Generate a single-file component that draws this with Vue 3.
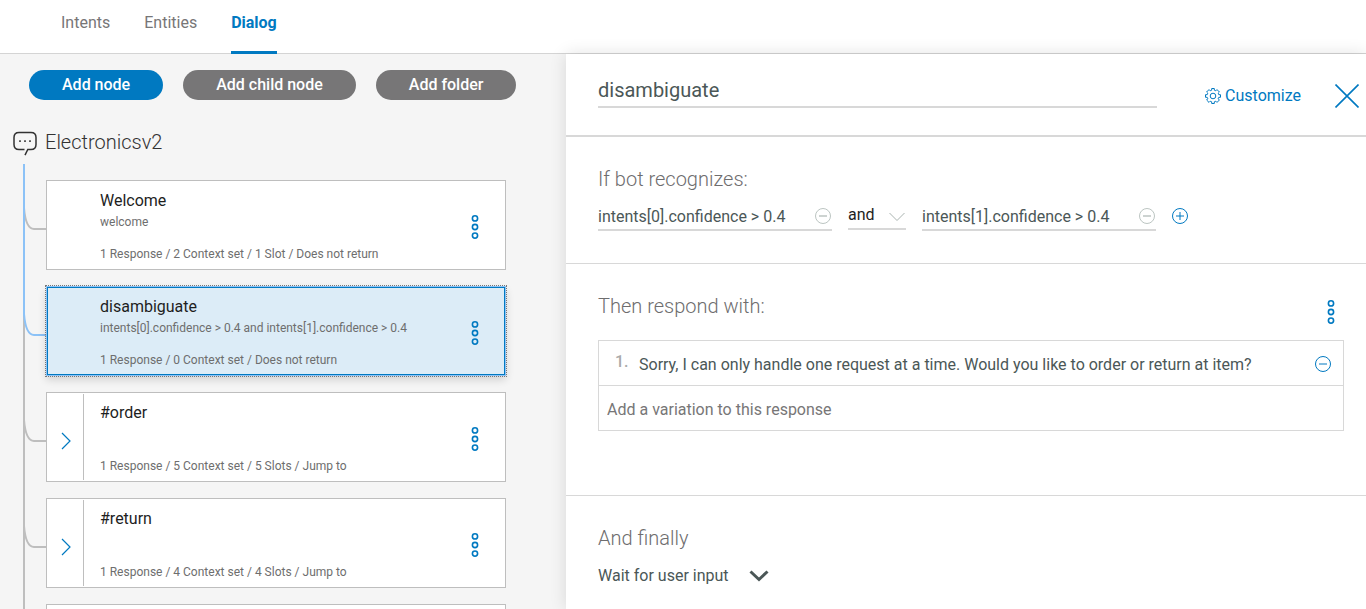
<template>
    <div class="workspace">
        <nav class="tabs">
            <a
                v-for="tab in tabs"
                :key="tab"
                href="#"
                class="tab"
                :class="{ active: tab === activeTab }"
                @click.prevent="activeTab = tab"
            >{{ tab }}</a>
        </nav>

        <div class="content">
            <section class="tree">
                <div class="toolbar">
                    <button type="button" class="pill primary">Add node</button>
                    <button type="button" class="pill">Add child node</button>
                    <button type="button" class="pill">Add folder</button>
                </div>

                <h1 class="skill">
                    <svg class="skill-icon" width="26" height="26" viewBox="0 0 26 26" fill="none" stroke="#323232" stroke-width="1.5">
                        <path d="M12.5 18.5H7Q2 18.5 2 13.500V6.500Q2 1.500 7 1.500H19Q24 1.500 24 6.500V13.500Q24 18.500 19 18.500H15.800L13 24.200" />
                        <path d="M7.200 10.200h1.600M12.200 10.200h1.600M17.200 10.200h1.600" stroke-width="1.700" />
                    </svg>
                    Electronicsv2
                </h1>

                <ul class="nodes">
                    <li v-for="node in nodes" :key="node.name" class="node">
                        <svg class="branch" width="23" height="106" viewBox="0 0 23 106" fill="none" stroke-width="2">
                            <path d="M1 0V106" stroke="#bebebe" />
                            <path d="M1 44C2 56 5 65 11 65H23" :stroke="node.trail === 'here' ? '#8cc2f7' : '#bebebe'" />
                            <path v-if="node.trail === 'here'" d="M1 0V46" stroke="#8cc2f7" />
                            <path v-if="node.trail === 'above'" d="M1 0V106" stroke="#8cc2f7" />
                        </svg>
                        <article class="card" :class="{ selected: node.name === selected }" @click="selected = node.name">
                            <div class="gutter" :class="{ divided: node.children }">
                                <button v-if="node.children" type="button" class="icon-button" :aria-label="`Expand ${node.name}`">
                                    <svg width="10" height="18" viewBox="0 0 10 18" fill="none" stroke="#0079c1" stroke-width="1.200">
                                        <path d="M1 1l8 8-8 8" />
                                    </svg>
                                </button>
                            </div>
                            <div class="card-body">
                                <h2 class="node-name">{{ node.name }}</h2>
                                <p class="condition">{{ node.condition }}</p>
                                <p class="summary">{{ node.summary }}</p>
                            </div>
                            <button type="button" class="icon-button card-menu" :aria-label="`${node.name} options`">
                                <svg width="8" height="24" viewBox="0 0 8 24" fill="none" stroke="#0079c1" stroke-width="1.600">
                                    <circle cx="4" cy="3.400" r="2.600" />
                                    <circle cx="4" cy="12" r="2.600" />
                                    <circle cx="4" cy="20.600" r="2.600" />
                                </svg>
                            </button>
                        </article>
                    </li>
                </ul>
            </section>

            <section class="editor">
                <header class="editor-header">
                    <input v-model="nodeName" class="name-input" type="text" aria-label="Node name">
                    <button type="button" class="icon-button customize">
                        <svg width="16" height="16" viewBox="0 0 16 16" fill="none" stroke="#0079c1" stroke-width="1">
                            <path d="M6.700 .5h2.600v1.700l1.500.6L12 1.600 14.400 4l-1.200 1.200.6 1.500h1.700v2.600h-1.700l-.6 1.500 1.200 1.200-2.400 2.400-1.200-1.200-1.500.6v1.700H6.700v-1.700l-1.500-.6L4 14.400 1.600 12l1.200-1.200-.6-1.500H.5V6.700h1.700l.6-1.500L1.600 4 4 1.600l1.200 1.200 1.500-.6z" stroke-linejoin="round" />
                            <circle cx="8" cy="8" r="2.800" />
                        </svg>
                        Customize
                    </button>
                    <button type="button" class="icon-button" aria-label="Close">
                        <svg width="24" height="24" viewBox="0 0 24 24" fill="none" stroke="#0079c1" stroke-width="1.600">
                            <path d="M.5.5l23 23M23.500.5l-23 23" />
                        </svg>
                    </button>
                </header>

                <section class="block">
                    <h3 class="block-title">If bot recognizes:</h3>
                    <div class="rule">
                        <div class="field">
                            <input v-model="conditions[0]" type="text" aria-label="First condition">
                            <button type="button" class="icon-button" aria-label="Remove first condition">
                                <svg width="16" height="16" viewBox="0 0 16 16" fill="none" stroke="#bcc5c2">
                                    <circle cx="8" cy="8" r="7.500" />
                                    <path d="M4 8h8" stroke-width="1.500" />
                                </svg>
                            </button>
                        </div>
                        <div class="operator">
                            <select v-model="operator" aria-label="Operator">
                                <option>and</option>
                                <option>or</option>
                            </select>
                            <svg width="16" height="10" viewBox="0 0 16 10" fill="none" stroke="#a9b3b0">
                                <path d="M.5 1L8 8.500 15.500 1" />
                            </svg>
                        </div>
                        <div class="field">
                            <input v-model="conditions[1]" type="text" aria-label="Second condition">
                            <button type="button" class="icon-button" aria-label="Remove second condition">
                                <svg width="16" height="16" viewBox="0 0 16 16" fill="none" stroke="#bcc5c2">
                                    <circle cx="8" cy="8" r="7.500" />
                                    <path d="M4 8h8" stroke-width="1.500" />
                                </svg>
                            </button>
                        </div>
                        <button type="button" class="icon-button" aria-label="Add condition">
                            <svg width="16" height="16" viewBox="0 0 16 16" fill="none" stroke="#0079c1">
                                <circle cx="8" cy="8" r="7.500" />
                                <path d="M4 8h8M8 4v8" />
                            </svg>
                        </button>
                    </div>
                </section>

                <section class="block respond">
                    <div class="block-head">
                        <h3 class="block-title">Then respond with:</h3>
                        <button type="button" class="icon-button respond-menu" aria-label="Response options">
                            <svg width="8" height="24" viewBox="0 0 8 24" fill="none" stroke="#0079c1" stroke-width="1.600">
                                <circle cx="4" cy="3.400" r="2.600" />
                                <circle cx="4" cy="12" r="2.600" />
                                <circle cx="4" cy="20.600" r="2.600" />
                            </svg>
                        </button>
                    </div>
                    <div class="responses">
                        <div class="response">
                            <span class="index">1.</span>
                            <input v-model="response" type="text" aria-label="Response 1">
                            <button type="button" class="icon-button" aria-label="Remove response">
                                <svg width="16" height="16" viewBox="0 0 16 16" fill="none" stroke="#0079c1">
                                    <circle cx="8" cy="8" r="7.500" />
                                    <path d="M4 8h8" />
                                </svg>
                            </button>
                        </div>
                        <div class="response variation">
                            <input type="text" placeholder="Add a variation to this response" aria-label="New variation">
                        </div>
                    </div>
                </section>

                <section class="block last">
                    <h3 class="block-title">And finally</h3>
                    <div class="finally">
                        <select v-model="finallyAction" aria-label="And finally">
                            <option>Wait for user input</option>
                            <option>Jump to</option>
                        </select>
                        <svg width="20" height="12" viewBox="0 0 20 12" fill="none" stroke="#4b5757" stroke-width="3">
                            <path d="M1.500 1.500L10 9.500l8.500-8" />
                        </svg>
                    </div>
                </section>
            </section>
        </div>
    </div>
</template>

<script setup>
import { ref } from 'vue'

const tabs = ['Intents', 'Entities', 'Dialog']
const activeTab = ref('Dialog')

const nodes = [
    {
        name: 'Welcome',
        condition: 'welcome',
        summary: '1 Response / 2 Context set / 1 Slot / Does not return',
        trail: 'above',
    },
    {
        name: 'disambiguate',
        condition: 'intents[0].confidence > 0.4 and intents[1].confidence > 0.4',
        summary: '1 Response / 0 Context set / Does not return',
        trail: 'here',
    },
    {
        name: '#order',
        summary: '1 Response / 5 Context set / 5 Slots / Jump to',
        children: true,
    },
    {
        name: '#return',
        summary: '1 Response / 4 Context set / 4 Slots / Jump to',
        children: true,
    },
    { name: '' },
]

const selected = ref('disambiguate')
const nodeName = ref('disambiguate')
const conditions = ref(['intents[0].confidence > 0.4', 'intents[1].confidence > 0.4'])
const operator = ref('and')
const response = ref('Sorry, I can only handle one request at a time. Would you like to order or return at item?')
const finallyAction = ref('Wait for user input')
</script>

<style>
body {
    margin: 0;
}
</style>

<style scoped>
.workspace {
    display: flex;
    flex-direction: column;
    height: 100vh;
    overflow: hidden;
    background: #fff;
    color: #323232;
    font-family: Roboto, 'Liberation Sans', sans-serif;
    font-size: 16px;
    line-height: 20px;
}

h1,
h2,
h3,
p,
ul {
    margin: 0;
    padding: 0;
}

svg {
    display: block;
    flex: none;
}

input,
select,
button {
    font: inherit;
    color: inherit;
    margin: 0;
    padding: 0;
    border: 0;
    background: none;
}

input {
    flex: 1;
    min-width: 0;
    padding-top: 2px;
    text-overflow: ellipsis;
}

select {
    appearance: none;
}

button {
    cursor: pointer;
}

.icon-button {
    display: flex;
    align-items: center;
    flex: none;
}

/* Tabs */
.tabs {
    display: flex;
    flex: none;
    gap: 34px;
    height: 54px;
    padding-left: 61px;
    box-sizing: border-box;
    box-shadow: inset 0 -1px #d4d4d4;
}

.tab {
    box-sizing: border-box;
    padding-top: 13px;
    color: #777677;
    text-decoration: none;
}

.tab.active {
    color: #0079c1;
    font-weight: 700;
    border-bottom: 3px solid #0079c1;
}

.content {
    display: flex;
    flex: 1;
    min-height: 0;
}

/* Dialog tree */
.tree {
    flex: 0 0 566px;
    box-sizing: border-box;
    padding: 16px 60px 0 23px;
    background: #f5f5f5;
    overflow: hidden;
}

.toolbar {
    display: flex;
    gap: 20px;
    padding-left: 6px;
}

.pill {
    height: 30px;
    padding: 0 33px;
    border-radius: 15px;
    background: #777677;
    color: #fff;
    font-weight: 500;
    white-space: nowrap;
}

.pill.primary {
    background: #0079c1;
}

.skill {
    display: flex;
    align-items: center;
    gap: 7px;
    height: 28px;
    margin: 28px 0 0 -11px;
    font-size: 20px;
    font-weight: 300;
}

.skill-icon {
    margin-top: 4px;
}

.nodes {
    padding-top: 8px;
    list-style: none;
}

.node {
    display: flex;
    align-items: flex-end;
}

.card {
    display: flex;
    flex: 1;
    box-sizing: border-box;
    height: 90px;
    min-width: 0;
    padding: 1px 0;
    border: 1px solid #bebebe;
    background: #fff;
}

.card.selected {
    border-color: #8cc2f7;
    background: #dcecf7;
    outline: 1px dotted #777;
    box-shadow: inset 0 0 0 1px #0079c1, 0 4px 8px rgba(0, 0, 0, 0.14);
}

.gutter {
    display: flex;
    align-items: center;
    justify-content: center;
    box-sizing: border-box;
    width: 37px;
    padding: 8px 0 0 2px;
    border-right: 1px solid transparent;
}

.gutter.divided {
    border-right-color: #bebebe;
}

.card-body {
    display: flex;
    flex: 1;
    flex-direction: column;
    min-width: 0;
    padding: 9px 0 5px 16px;
    color: #6e6e6e;
    font-size: 12px;
    line-height: 18px;
    white-space: nowrap;
}

.node-name {
    color: #1e1e1e;
    font-size: 16px;
    font-weight: 400;
    line-height: 20px;
}

.condition {
    padding-top: 2px;
}

.summary {
    margin-top: auto;
}

.card-menu {
    margin-right: 26px;
    padding-top: 4px;
}

/* Node editor */
.editor {
    position: relative;
    flex: 1;
    min-width: 0;
    background: #fff;
    box-shadow: 0 0 16px rgba(0, 0, 0, 0.12);
}

.editor-header {
    display: flex;
    align-items: center;
    box-sizing: border-box;
    height: 83px;
    padding: 2px 7px 0 32px;
    border-bottom: 2px solid #d8d8d8;
}

.name-input {
    height: 32px;
    margin: 0 48px 12px 0;
    border-bottom: 2px solid #d8d8d8;
    color: #4b5757;
    font-size: 20px;
}

.customize {
    gap: 4px;
    margin-right: 34px;
    color: #0079c1;
}

.block {
    padding: 30px 22px 32px 32px;
    border-bottom: 1px solid #d8d8d8;
}

.block-title {
    color: #6e6d6e;
    font-size: 20px;
    font-weight: 300;
    line-height: 24px;
}

.rule {
    display: flex;
    align-items: center;
    gap: 16px;
    padding-top: 10px;
}

.field {
    display: flex;
    align-items: center;
    box-sizing: border-box;
    width: 234px;
    height: 30px;
    padding: 2px 1px 0 0;
    border-bottom: 2px solid #d8d8d8;
    color: #4b5757;
}

.operator {
    display: flex;
    align-items: center;
    justify-content: space-between;
    box-sizing: border-box;
    width: 58px;
    height: 28px;
    padding-right: 1px;
    border-bottom: 2px solid #d8d8d8;
    color: #1e1e1e;
}

.operator svg {
    margin-top: 3px;
}

.respond {
    padding-bottom: 64px;
}

.block-head {
    display: flex;
    justify-content: space-between;
}

.respond-menu {
    margin-right: 9px;
    padding-top: 6px;
}

.responses {
    margin-top: 16px;
    border: 1px solid #d8d8d8;
    color: #4b5757;
}

.response {
    display: flex;
    align-items: center;
    height: 44px;
    padding: 1px 12px 0 16px;
    box-sizing: border-box;
}

.index {
    width: 24px;
    padding-bottom: 4px;
    color: #aaa;
    font-weight: 500;
}

.variation {
    height: 45px;
    padding-left: 8px;
    border-top: 1px solid #d8d8d8;
}

.variation input::placeholder {
    color: #777677;
    opacity: 1;
}

.last {
    border-bottom: 0;
}

.finally {
    display: flex;
    align-items: center;
    gap: 20px;
    padding-top: 16px;
    color: #4b5757;
}
</style>
